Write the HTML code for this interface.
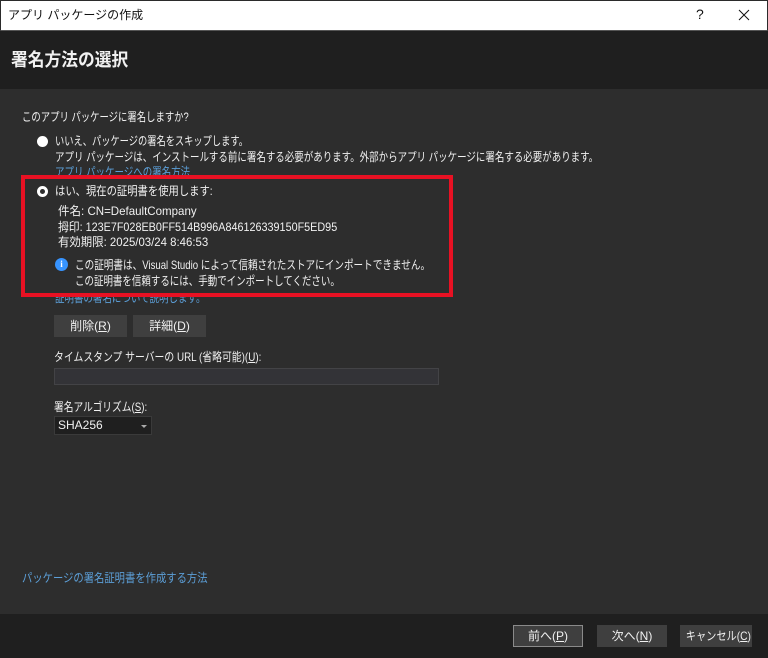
<!DOCTYPE html>
<html><head><meta charset="utf-8"><style>
*{margin:0;padding:0;box-sizing:border-box}
body{width:768px;height:658px;background:#2d2d2d;font-family:"Liberation Sans","Noto Sans CJK JP",sans-serif;font-size:12px;color:#f1f1f1;position:relative;overflow:hidden}
.a{position:absolute;white-space:nowrap;transform-origin:0 0}
.t{line-height:15px}
.link{color:#5c9fd8}
.btn{position:absolute;background:#3f3f3f;color:#f1f1f1;text-align:center;font-size:12px;line-height:22px;white-space:nowrap}
</style></head><body>
<div class="a" style="left:0;top:0;width:768px;height:31px;background:#fff;border:1px solid #2b2b2b;border-bottom:1px solid #555"></div>
<div class="a t" style="left:8px;top:8px;color:#111;font-size:12px">アプリ パッケージの作成</div>
<div class="a" style="left:696px;top:6px;color:#111;font-size:14px">?</div>
<svg class="a" style="left:738px;top:9px" width="12" height="12"><path d="M1 1L11 11M11 1L1 11" stroke="#111" stroke-width="1"/></svg>
<div class="a" style="left:0;top:31px;width:768px;height:58px;background:#1f1f1f"></div>
<div class="a" style="left:11px;top:48px;font-size:18px;font-weight:bold;color:#f1f1f1;line-height:24px;transform:scaleX(0.93)">署名方法の選択</div>

<div class="a t" style="left:22px;top:110px;transform:scaleX(0.78)">このアプリ パッケージに署名しますか?</div>
<div class="a" style="left:37px;top:136px;width:11px;height:11px;border-radius:50%;background:#fff"></div>
<div class="a t" style="left:55px;top:134px;transform:scaleX(0.77)">いいえ、パッケージの署名をスキップします。</div>
<div class="a t" style="left:55px;top:150px;transform:scaleX(0.79)">アプリ パッケージは、インストールする前に署名する必要があります。外部からアプリ パッケージに署名する必要があります。</div>
<div class="a t link" style="left:55px;top:165px;transform:scaleX(0.79)">アプリ パッケージへの署名方法</div>
<div class="a t link" style="left:55px;top:291px;transform:scaleX(0.79)">証明書の署名について説明します。</div>

<div class="a" style="left:21px;top:175px;width:432px;height:122px;border:4px solid #e81123;background:#2d2d2d"></div>
<div class="a" style="left:37px;top:186px;width:11px;height:11px;border-radius:50%;background:#fff;border:3px solid #fff"><div style="width:5px;height:5px;border-radius:50%;background:#2d2d2d"></div></div>
<div class="a t" style="left:55px;top:184px;transform:scaleX(0.86)">はい、現在の証明書を使用します:</div>
<div class="a t" style="left:58px;top:204px;transform:scaleX(0.96)">件名: CN=DefaultCompany</div>
<div class="a t" style="left:58px;top:220px;transform:scaleX(0.9)">拇印: 123E7F028EB0FF514B996A846126339150F5ED95</div>
<div class="a t" style="left:58px;top:235px;transform:scaleX(0.95)">有効期限: 2025/03/24 8:46:53</div>
<div class="a" style="left:55px;top:258px;width:13px;height:13px;border-radius:50%;background:#3794ff;color:#fff;font-size:9px;font-weight:bold;text-align:center;line-height:13px;font-family:'Liberation Serif',serif">i</div>
<div class="a t" style="left:75px;top:258px;transform:scaleX(0.8)">この証明書は、Visual Studio によって信頼されたストアにインポートできません。</div>
<div class="a t" style="left:75px;top:274px;transform:scaleX(0.79)">この証明書を信頼するには、手動でインポートしてください。</div>

<div class="btn" style="left:54px;top:315px;width:73px">削除(<u>R</u>)</div>
<div class="btn" style="left:133px;top:315px;width:73px">詳細(<u>D</u>)</div>
<div class="a t" style="left:54px;top:350px;transform:scaleX(0.82)">タイムスタンプ サーバーの URL (省略可能)(<u>U</u>):</div>
<div class="a" style="left:54px;top:368px;width:385px;height:17px;background:#333337;border:1px solid #434346"></div>
<div class="a t" style="left:54px;top:400px;transform:scaleX(0.81)">署名アルゴリズム(<u>S</u>):</div>
<div class="a" style="left:54px;top:416px;width:98px;height:19px;background:#1f1f1f;border:1px solid #3a3a3a"></div>
<div class="a t" style="left:58px;top:418px">SHA256</div>
<div class="a" style="left:141px;top:425px;width:0;height:0;border-left:3px solid transparent;border-right:3px solid transparent;border-top:3px solid #aaa"></div>

<div class="a t link" style="left:22px;top:571px;transform:scaleX(0.86)">パッケージの署名証明書を作成する方法</div>
<div class="a" style="left:0;top:614px;width:768px;height:44px;background:#1f1f1f"></div>
<div class="btn" style="left:513px;top:625px;width:70px;height:22px;line-height:20px;border:1px solid #8a8a8a">前へ(<u>P</u>)</div>
<div class="btn" style="left:597px;top:625px;width:70px;height:22px">次へ(<u>N</u>)</div>
<div class="btn" style="left:680px;top:625px;width:72px;height:22px;overflow:hidden"><span style="display:inline-block;transform:scaleX(0.85)">キャンセル(<u>C</u>)</span></div>
</body></html>
